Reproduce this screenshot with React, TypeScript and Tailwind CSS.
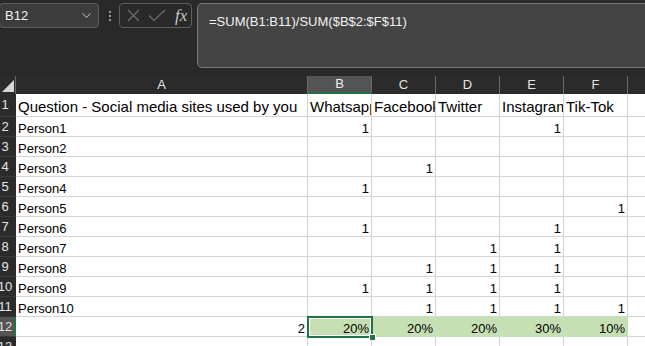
import { ChevronDown } from 'lucide-react';

const COLS = ['A', 'B', 'C', 'D', 'E', 'F', 'G'];

// valores por fila (B..F); '' = vacía
const PEOPLE: { name: string; vals: string[] }[] = [
  { name: 'Person1', vals: ['1', '', '', '1', ''] },
  { name: 'Person2', vals: ['', '', '', '', ''] },
  { name: 'Person3', vals: ['', '1', '', '', ''] },
  { name: 'Person4', vals: ['1', '', '', '', ''] },
  { name: 'Person5', vals: ['', '', '', '', '1'] },
  { name: 'Person6', vals: ['1', '', '', '1', ''] },
  { name: 'Person7', vals: ['', '', '1', '1', ''] },
  { name: 'Person8', vals: ['', '1', '1', '1', ''] },
  { name: 'Person9', vals: ['1', '1', '1', '1', ''] },
  { name: 'Person10', vals: ['', '1', '1', '1', '1'] },
];

const HEADERS = ['Whatsapp', 'Facebook', 'Twitter', 'Instagram', 'Tik-Tok'];
const TOTALS = ['20%', '20%', '20%', '30%', '10%'];

const RowHead = ({ n, active }: { n: number; active?: boolean }) => (
  <div
    className={`overflow-hidden flex items-center border-b border-[#3a3a3a] ${
      active ? 'bg-[#545454] border-r-2 border-r-[#217346]' : 'bg-[#2b2b2b]'
    }`}
  >
    <span className="ml-[-8px] w-[26px] shrink-0 text-center text-[13px] text-[#e4e4e4]">{n}</span>
  </div>
);

const Cell = ({
  text,
  right,
  big,
  green,
}: {
  text?: string;
  right?: boolean;
  big?: boolean;
  green?: boolean;
}) => (
  <div
    className={`flex items-end overflow-hidden whitespace-nowrap border-r border-b px-[2px] text-black ${
      green ? 'bg-[#c6e0b4] border-[#c6e0b4]' : 'bg-white border-[#d4d4d4]'
    } ${right ? 'justify-end' : 'justify-start'} ${
      big ? 'text-[15px] leading-[18px]' : 'text-[13px] leading-[15px]'
    }`}
  >
    {text}
  </div>
);

const App = () => {
  return (
    <div className="w-[645px] h-[346px] overflow-hidden bg-[#292929] font-['Liberation_Sans',Arial,sans-serif]">
      {/* barra de fórmulas */}
      <div className="flex items-start h-[76px] pt-[3px]">
        <div className="ml-[-1px] w-[100px] h-[25px] shrink-0 rounded-[4px] border border-[#5e5e5e] bg-[#3c3c3c] flex items-center justify-between pl-[5px] pr-[4px]">
          <span className="text-[13px] text-[#f0f0f0]">B12</span>
          <ChevronDown size={15} strokeWidth={1.5} className="text-[#cfcfcf]" />
        </div>
        <div className="ml-[9px] h-[25px] w-[3px] flex flex-col items-center justify-center gap-[2px]">
          <span className="w-[2px] h-[2px] bg-[#9a9a9a]" />
          <span className="w-[2px] h-[2px] bg-[#9a9a9a]" />
          <span className="w-[2px] h-[2px] bg-[#9a9a9a]" />
        </div>
        <div className="ml-[8px] w-[73px] h-[25px] shrink-0 rounded-[4px] border border-[#5e5e5e] flex items-center pl-[7px] gap-[8px]">
          <svg width="13" height="13" viewBox="0 0 13 13" className="shrink-0">
            <path d="M1 1 L12 12 M12 1 L1 12" stroke="#6e6e6e" strokeWidth="1.2" fill="none" />
          </svg>
          <svg width="18" height="13" viewBox="0 0 18 13" className="shrink-0">
            <path d="M1 6.5 L6 11.5 L17 1" stroke="#6e6e6e" strokeWidth="1.2" fill="none" />
          </svg>
          <span className="ml-[1px] text-[17px] italic text-[#c8c8c8] font-['Liberation_Serif',serif] leading-none">
            fx
          </span>
        </div>
        <div className="ml-[5px] mr-[-12px] flex-1 h-[65px] rounded-[5px] border border-[#7a7a7a] bg-[#444444] pl-[11px] pt-[5px]">
          <span className="text-[13px] leading-[15px] text-[#f2f2f2]">=SUM(B1:B11)/SUM($B$2:$F$11)</span>
        </div>
      </div>

      {/* hoja */}
      <div className="grid grid-cols-[16px_292px_64px_64px_64px_64px_64px_64px] grid-rows-[18px_23px_repeat(12,20px)]">
        <div className="bg-[#2b2b2b] border-r border-[#6a6a6a] relative">
          <svg width="16" height="18" viewBox="0 0 16 18" className="absolute inset-0">
            <polygon points="14,4 14,16 2,16" fill="#d8d8d8" />
          </svg>
        </div>
        {COLS.map((c) => (
          <div
            key={c}
            className={`flex items-center justify-center text-[13px] border-r border-[#6a6a6a] ${
              c === 'B'
                ? 'bg-[#545454] border-b-2 border-b-[#217346] text-[#f0f0f0]'
                : 'bg-[#2b2b2b] text-[#e4e4e4]'
            }`}
          >
            {c}
          </div>
        ))}

        <RowHead n={1} />
        <Cell big text="Question - Social media sites used by you" />
        {HEADERS.map((h) => (
          <Cell key={h} big text={h} />
        ))}
        <Cell />

        {PEOPLE.map((p, i) => (
          <div key={p.name} className="contents">
            <RowHead n={i + 2} />
            <Cell text={p.name} />
            {p.vals.map((v, j) => (
              <Cell key={j} right text={v} />
            ))}
            <Cell />
          </div>
        ))}

        <RowHead n={12} active />
        <Cell right text="2" />
        <div className="relative z-10 flex items-end justify-end bg-[#c6e0b4] border-r border-b border-[#c6e0b4] px-[2px] text-[13px] leading-[15px] text-black">
          20%
          <div className="absolute left-[-1px] top-[-1px] right-[-2px] bottom-[-2px] border-2 border-[#217346]">
            <div className="absolute inset-0 border border-white" />
          </div>
          <div className="absolute right-[-5px] bottom-[-5px] w-[7px] h-[7px] bg-[#217346] border border-white" />
        </div>
        {TOTALS.slice(1).map((t, k) => (
          <Cell key={k} right green text={t} />
        ))}
        <Cell />

        <RowHead n={13} />
        {COLS.map((c) => (
          <Cell key={c} />
        ))}
      </div>
    </div>
  );
};

export default App;
